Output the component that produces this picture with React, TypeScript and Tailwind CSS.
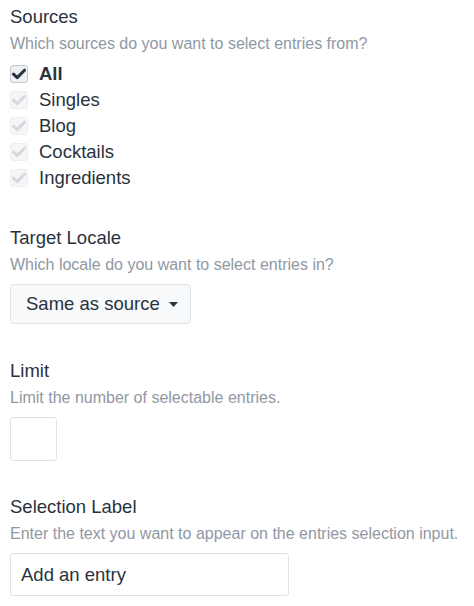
import React from "react";

function Check({ dark }: { dark?: boolean }) {
  return (
    <span
      className={
        dark
          ? "flex h-[18px] w-[18px] items-center justify-center rounded-[3px] border border-[#c5cad1] bg-[#eef0f3]"
          : "flex h-[18px] w-[18px] items-center justify-center rounded-[3px] border border-[#eceef1] bg-[#f5f6f8]"
      }
    >
      <svg width="14" height="12" viewBox="0 0 14 12">
        <path
          d="M1.5 6.2 L5.2 9.6 L12.5 2.2"
          fill="none"
          stroke={dark ? "#29323d" : "#d5d8dc"}
          strokeWidth="3"
          strokeLinecap="round"
          strokeLinejoin="round"
        />
      </svg>
    </span>
  );
}

export default function App() {
  const items = ["Singles", "Blog", "Cocktails", "Ingredients"];
  return (
    <div
      className="bg-white px-[10px] pt-[5px] text-[#29323d]"
      style={{ fontFamily: '"Liberation Sans", Arial, sans-serif' }}
    >
      <div className="text-[18.5px] leading-[24px]">Sources</div>
      <div className="mt-[5px] text-[16px] leading-[20px] text-[#8f98a3]">
        Which sources do you want to select entries from?
      </div>
      <div className="mt-[7px] flex flex-col">
        <div className="flex h-[26px] items-center gap-[11px]">
          <Check dark />
          <span className="text-[18.5px] font-bold">All</span>
        </div>
        {items.map((t) => (
          <div key={t} className="flex h-[26px] items-center gap-[11px]">
            <Check />
            <span className="text-[18.5px]">{t}</span>
          </div>
        ))}
      </div>

      <div className="mt-[35px] text-[18.5px] leading-[24px]">Target Locale</div>
      <div className="mt-[5px] text-[16px] leading-[20px] text-[#8f98a3]">
        Which locale do you want to select entries in?
      </div>
      <div className="mt-[9px] flex h-[40px] w-[181px] items-center rounded-[4px] border border-[#dfe2e6] bg-[#f8f9fa] pl-[15px]">
        <span className="text-[18.5px]">Same as source</span>
        <svg className="ml-[9px]" width="9" height="5" viewBox="0 0 9 5">
          <path d="M0 0 L9 0 L4.5 5 Z" fill="#29323d" />
        </svg>
      </div>

      <div className="mt-[35px] text-[18.5px] leading-[24px]">Limit</div>
      <div className="mt-[5px] text-[16px] leading-[20px] text-[#8f98a3]">
        Limit the number of selectable entries.
      </div>
      <div className="mt-[9px] h-[44px] w-[47px] rounded-[3px] border border-[#dfe2e6] bg-white" />

      <div className="mt-[34px] text-[18.5px] leading-[24px]">Selection Label</div>
      <div className="mt-[5px] text-[16px] leading-[20px] text-[#8f98a3]">
        Enter the text you want to appear on the entries selection input.
      </div>
      <div className="mt-[9px] flex h-[43px] w-[279px] items-center rounded-[3px] border border-[#dfe2e6] bg-white pl-[10px]">
        <span className="text-[18.5px]">Add an entry</span>
      </div>
    </div>
  );
}
